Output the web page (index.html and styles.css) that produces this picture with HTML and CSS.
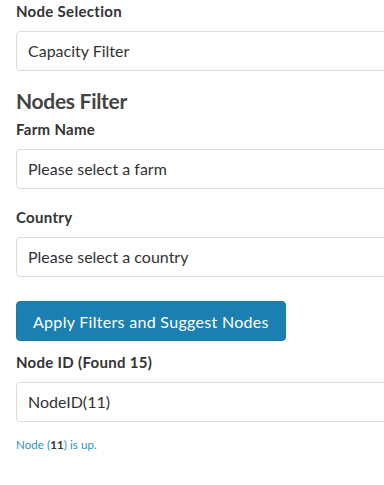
FILE: index.html
```html
<!DOCTYPE html>
<html>
<head>
<meta charset="utf-8">
<link rel="stylesheet" href="styles.css">
</head>
<body>
<div class="panel">
  <div class="group">
    <label class="label">Node Selection</label>
    <div class="select">Capacity Filter</div>
  </div>
  <h3 class="heading">Nodes Filter</h3>
  <div class="group">
    <label class="label">Farm Name</label>
    <div class="select">Please select a farm</div>
  </div>
  <div class="group">
    <label class="label">Country</label>
    <div class="select">Please select a country</div>
  </div>
  <button class="btn">Apply Filters and Suggest Nodes</button>
  <div class="group">
    <label class="label">Node ID (Found 15)</label>
    <div class="select">NodeID(11)</div>
  </div>
  <p class="status">Node (<b>11</b>) is up.</p>
</div>
</body>
</html>
```
FILE: styles.css
```css
html, body {
  margin: 0;
  padding: 0;
  background: #fff;
  overflow: hidden;
}
body {
  font-family: "Lato", "Open Sans", sans-serif;
  color: #333;
}
.panel {
  padding: 0 0 0 16px;
  width: 400px;
}
.group {
  display: flex;
  flex-direction: column;
}
.label {
  display: block;
  font-weight: 700;
  font-size: 15px;
  letter-spacing: 0.3px;
  line-height: 22px;
  color: #333;
  margin: 0 0 9px;
}
.select {
  box-sizing: border-box;
  height: 40px;
  border: 1px solid #ddd;
  border-radius: 4px;
  padding: 0 11px;
  font-size: 16px;
  line-height: 38px;
  color: #333;
  margin-bottom: 17px;
}
.heading {
  font-size: 21px;
  font-weight: 700;
  letter-spacing: -0.3px;
  line-height: 26px;
  margin: 0 0 4px;
  color: #444;
}
.btn {
  display: block;
  box-sizing: border-box;
  height: 40px;
  padding: 0 16px;
  border: 1px solid #1a7aa8;
  border-radius: 4px;
  background: #1b80b1;
  color: #fff;
  font-family: inherit;
  font-size: 16px;
  letter-spacing: 0.3px;
  margin: 7px 0 10px;
}
.status {
  margin: -2px 0 0;
  font-size: 11.5px;
  letter-spacing: 0.1px;
  line-height: 15px;
  color: #2a8fc7;
}
.status b {
  color: #333;
}
```
